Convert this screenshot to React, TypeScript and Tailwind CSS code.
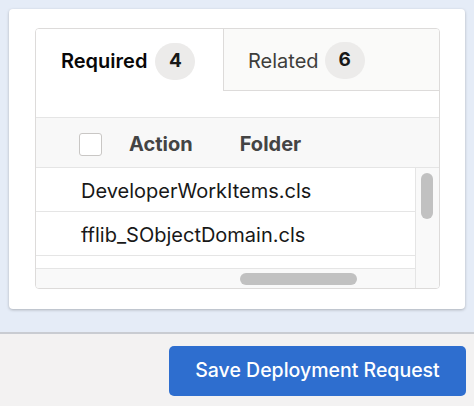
import React from "react";

const rows = ["DeveloperWorkItems.cls", "fflib_SObjectDomain.cls", ""];

function Badge({ n, gap }: { n: number; gap: string }) {
  return (
    <span
      className={`${gap} flex h-[37px] w-[40px] items-center justify-center rounded-full bg-[#ecebea] font-bold text-[19px] text-[#181818]`}
    >
      {n}
    </span>
  );
}

export default function App() {
  return (
    <div
      className="flex h-[406px] w-[474px] flex-col overflow-hidden"
      style={{ fontFamily: "Inter, 'Liberation Sans', sans-serif" }}
    >
      <div className="bg-[#e5ecf7] px-[9px] pt-[9px] pb-[23px]">
        <div className="h-[300px] rounded-[4px] bg-white pt-[19px] pr-[25px] pl-[26px] pb-[20px] shadow-[0_1px_3px_rgba(0,0,0,0.25)]">
          <div className="flex h-full flex-col overflow-hidden rounded-[4px] border border-[#dddbda]">
            {/* tabs */}
            <div className="flex h-[62px] shrink-0">
              <div className="flex w-[187px] items-center bg-white pt-[2px] pl-[25px]">
                <span className="font-semibold text-[20px] text-[#080707]">Required</span>
                <Badge n={4} gap="ml-[8px]" />
              </div>
              <div className="flex flex-1 items-center border-b border-l border-[#dddbda] bg-[#fafaf9] pt-[2px] pl-[24px]">
                <span className="text-[20px] text-[#3e3e3c]">Related</span>
                <Badge n={6} gap="ml-[6px]" />
              </div>
            </div>
            <div className="h-[26px] shrink-0 bg-white" />
            {/* table header */}
            <div className="flex h-[51px] shrink-0 items-center border-y border-[#e5e5e5] bg-[#f8f8f8] pt-[3px]">
              <div className="ml-[43px] h-[23px] w-[23px] rounded-[3px] border border-[#c9c7c5] bg-white" />
              <span className="ml-[27px] font-bold text-[20px] text-[#444444]">Action</span>
              <span className="ml-[47px] font-bold text-[20px] text-[#444444]">Folder</span>
            </div>
            {/* body */}
            <div className="flex min-h-0 flex-1">
              <div className="flex flex-1 flex-col overflow-hidden">
                <div className="h-[101px] overflow-hidden border-b border-[#e5e5e5] bg-white">
                  {rows.map((r, i) => (
                    <div
                      key={i}
                      className="flex h-[44px] items-center border-b border-[#e5e5e5] pt-[3px] pl-[45px] text-[20px] text-[#181818]"
                    >
                      {r}
                    </div>
                  ))}
                </div>
                <div className="flex flex-1 items-center bg-[#f9f9f9] pl-[204px]">
                  <div className="h-[12px] w-[117px] rounded-full bg-[#c1c1c1]" />
                </div>
              </div>
              <div className="flex w-[24px] flex-col border-l border-[#e5e5e5] bg-[#f9f9f9]">
                <div className="h-[101px] pt-[5px] pl-[5px]">
                  <div className="h-[46px] w-[12px] rounded-full bg-[#c1c1c1]" />
                </div>
              </div>
            </div>
          </div>
        </div>
      </div>
      <div className="h-[2px] shrink-0 bg-[#c9ccd2]" />
      <div className="flex flex-1 justify-end bg-[#f3f2f2] pt-[12px] pr-[8px]">
        <button className="h-[50px] w-[297px] rounded-[5px] bg-[#2e6ecf] text-[19.5px] font-medium text-white">
          Save Deployment Request
        </button>
      </div>
    </div>
  );
}
